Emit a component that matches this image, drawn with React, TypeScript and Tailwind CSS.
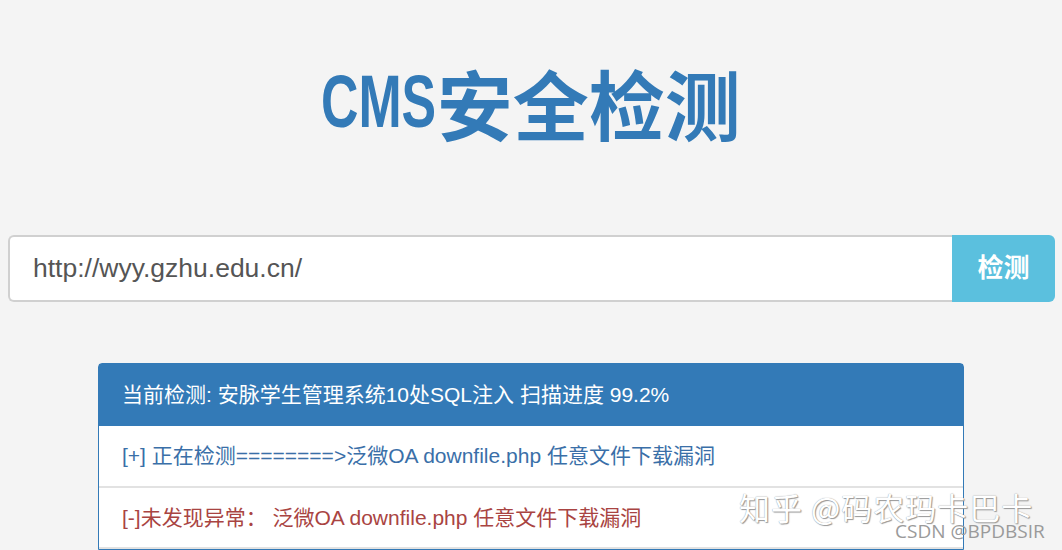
export default function App() {
  const cjk = "font-['Liberation_Sans','Noto_Sans_CJK_SC',sans-serif]";
  return (
    <div className={`relative h-[550px] overflow-hidden bg-[#f4f4f4] ${cjk}`}>
      <h1 className="flex h-[76px] items-center justify-center pt-[0px] mt-[64px] text-[76px] leading-none font-bold text-[#337ab7]">
        <span className="inline-block origin-left scale-x-[0.7] mr-[-49px] font-['Liberation_Sans',sans-serif] text-[74px]">CMS</span>
        <span className="font-['Noto_Sans_CJK_SC',sans-serif]">安全检测</span>
      </h1>

      <div className="ml-[8px] mr-[7px] mt-[95px] flex h-[67px]">
        <input
          readOnly
          value="http://wyy.gzhu.edu.cn/"
          className="h-full flex-1 rounded-l-[6px] border-2 border-r-0 border-[#d0d0d0] bg-white px-[23px] text-[26.5px] text-[#555] outline-none"
        />
        <button className="h-full w-[103px] rounded-r-[6px] bg-[#5bc0de] text-[26px] font-bold text-white">
          检测
        </button>
      </div>

      <div className="mx-auto mt-[61px] w-[866px] rounded-t-[4px] border border-[#337ab7] bg-white">
        <div className="flex h-[62px] items-center bg-[#337ab7] px-[23px] text-[21px] text-white">
          当前检测: 安脉学生管理系统10处SQL注入 扫描进度 99.2%
        </div>
        <div className="flex h-[62px] items-center border-b-2 border-[#e2e2e2] px-[23px] text-[21px] text-[#3a6fa8]">
          [+] 正在检测========&gt;泛微OA downfile.php 任意文件下载漏洞
        </div>
        <div className="flex h-[61px] items-center border-b-2 border-[#e2e2e2] px-[23px] text-[21px] text-[#a94442]">
          [-]未发现异常： 泛微OA downfile.php 任意文件下载漏洞
        </div>
      </div>

      <div className="pointer-events-none absolute left-[739px] top-[484px] font-['Noto_Sans_CJK_SC',sans-serif] text-[31px] tracking-[1px] text-white [text-shadow:0_0_1px_#888,1px_1px_1px_#999]">
        知乎 @码农玛卡巴卡
      </div>
      <div className="pointer-events-none absolute left-[895px] top-[517px] font-['Open_Sans',sans-serif] text-[19px] text-[#9a9a9a]">
        CSDN @BPDBSIR
      </div>
    </div>
  );
}
